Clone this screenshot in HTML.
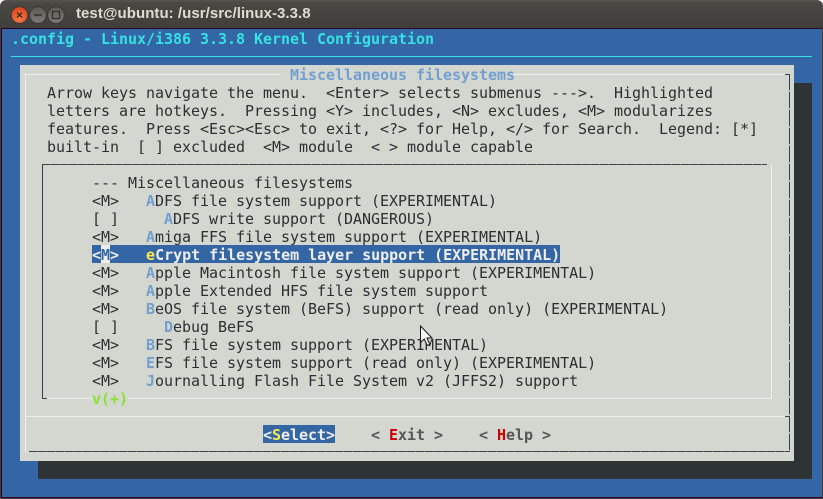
<!DOCTYPE html>
<html><head><meta charset="utf-8">
<style>
html,body{margin:0;padding:0;background:#000;}
#w{position:relative;width:823px;height:499px;overflow:hidden;background:#2c001e;}
.a{position:absolute;}
.t{position:absolute;white-space:pre;font:15px/18px "DejaVu Sans Mono","Liberation Mono",monospace;letter-spacing:-0.03px;color:#2a3032;height:18px;transform:translateY(1px);}
.b{color:#729fcf;}
.hl{color:#eeeeec;font-weight:bold;}
.lt{background:#eeeeec;position:absolute;}
.dk{position:absolute;background:#3c4246;}
.dh{background:repeating-linear-gradient(90deg,#3c4246 0,#3c4246 8px,#6f8294 8px,#6f8294 9px);}
.dv{background:repeating-linear-gradient(180deg,#2e3f55 0,#2e3f55 16px,#aeb4b4 16px,#aeb4b4 18px);}
</style></head><body>
<div id="w">
<!-- corners -->
<div class="a" style="left:0;top:0;width:823px;height:499px;background:#fff"></div>
<!-- title bar -->
<div class="a" style="left:0;top:0;width:823px;height:29px;border-radius:6px 6px 0 0;background:linear-gradient(#55534e 0,#4a4843 3px,#3f3e3a 28px)"></div>
<!-- window frame -->
<div class="a" style="left:0;top:28px;width:823px;height:471px;background:#3f3e3a"></div>
<div class="a" style="left:1px;top:28px;width:821px;height:470px;background:#2c001e"></div>
<div class="a" style="left:2px;top:29px;width:820px;height:468px;background:#3465a4"></div>
<!-- buttons -->
<svg class="a" style="left:0;top:0" width="72" height="30">
<defs>
<radialGradient id="r" cx="50%" cy="75%" r="65%"><stop offset="0" stop-color="#f47a45"/><stop offset="1" stop-color="#dd4a22"/></radialGradient>
<linearGradient id="g" x1="0" y1="0" x2="0" y2="1"><stop offset="0" stop-color="#5b5a55"/><stop offset="1" stop-color="#7d7c76"/></linearGradient>
</defs>
<circle cx="19.5" cy="15" r="8.6" fill="#33322e"/>
<circle cx="19.5" cy="15" r="7.9" fill="url(#r)"/>
<path d="M17 12.5l5 5M22 12.5l-5 5" stroke="#3c2a20" stroke-width="1.4" fill="none"/>
<circle cx="38" cy="15" r="8.6" fill="#33322e"/>
<circle cx="38" cy="15" r="7.9" fill="url(#g)"/>
<path d="M34 15h8" stroke="#33322e" stroke-width="1.5"/>
<circle cx="56" cy="15" r="8.6" fill="#33322e"/>
<circle cx="56" cy="15" r="7.9" fill="url(#g)"/>
<rect x="52.5" y="11.5" width="7" height="7" fill="none" stroke="#33322e" stroke-width="1.3"/>
</svg>
<div class="a" style="left:76px;top:4px;font:bold 15px/20px 'Liberation Sans',sans-serif;color:#dfdbd2;white-space:pre;letter-spacing:0.05px">test@ubuntu: /usr/src/linux-3.3.8</div>

<!-- header -->
<div class="t" style="left:11px;top:29px;color:#34e2e2;font-weight:bold">.config - Linux/i386 3.3.8 Kernel Configuration</div>
<div class="a" style="left:11px;top:56px;width:801px;height:1px;background:#34e2e2"></div>

<!-- shadow and dialog -->
<div class="a" style="left:38px;top:83px;width:774px;height:396px;background:#2e3436"></div>
<div class="a" style="left:20px;top:65px;width:774px;height:396px;background:#d3d7cf"></div>

<!-- outer border -->
<div class="lt" style="left:24px;top:74px;width:256px;height:1px"></div>
<div class="lt" style="left:514px;top:74px;width:271px;height:1px"></div>
<div class="lt" style="left:25px;top:74px;width:1px;height:378px"></div>
<div class="dk" style="left:785px;top:74px;width:5px;height:1px"></div>
<div class="dk dv" style="left:789px;top:74px;width:1px;height:378px"></div>
<div class="dk dh" style="left:29px;top:451px;width:761px;height:1px"></div>
<div class="lt" style="left:25px;top:416px;width:760px;height:1px"></div>
<div class="dk" style="left:785px;top:416px;width:5px;height:1px"></div>

<!-- inner list border -->
<div class="dk dh" style="left:42px;top:164px;width:725px;height:1px"></div>
<div class="dk" style="left:42px;top:164px;width:1px;height:234px;background:#2e3f55"></div>
<div class="dk" style="left:42px;top:398px;width:5px;height:1px"></div>
<div class="lt" style="left:47px;top:398px;width:725px;height:1px"></div>
<div class="lt" style="left:771px;top:164px;width:1px;height:235px"></div>

<!-- dialog title -->
<div class="t" style="left:290px;top:65px;color:#729fcf;font-weight:bold">Miscellaneous filesystems</div>

<!-- help text -->
<div class="t" style="left:47px;top:83px">Arrow keys navigate the menu.  &lt;Enter&gt; selects submenus ---&gt;.  Highlighted</div>
<div class="t" style="left:47px;top:101px">letters are hotkeys.  Pressing &lt;Y&gt; includes, &lt;N&gt; excludes, &lt;M&gt; modularizes</div>
<div class="t" style="left:47px;top:119px">features.  Press &lt;Esc&gt;&lt;Esc&gt; to exit, &lt;?&gt; for Help, &lt;/&gt; for Search.  Legend: [*]</div>
<div class="t" style="left:47px;top:137px">built-in  [ ] excluded  &lt;M&gt; module  &lt; &gt; module capable</div>

<!-- list -->
<div class="t" style="left:92px;top:173px">--- Miscellaneous filesystems</div>
<div class="t" style="left:92px;top:191px">&lt;M&gt;   <span class="b" style="font-weight:bold">A</span>DFS file system support (EXPERIMENTAL)</div>
<div class="t" style="left:92px;top:209px">[ ]     <span class="b" style="font-weight:bold">A</span>DFS write support (DANGEROUS)</div>
<div class="t" style="left:92px;top:227px">&lt;M&gt;   <span class="b" style="font-weight:bold">A</span>miga FFS file system support (EXPERIMENTAL)</div>
<div class="a" style="left:92px;top:245px;width:468px;height:18px;background:#3465a4"></div>
<div class="a" style="left:101px;top:245px;width:9px;height:18px;background:#eeeeec"></div>
<div class="t hl" style="left:92px;top:245px">&lt;<span style="color:#3465a4">M</span>&gt;   <span style="color:#fce94f">e</span>Crypt filesystem layer support (EXPERIMENTAL)</div>
<div class="t" style="left:92px;top:263px">&lt;M&gt;   <span class="b" style="font-weight:bold">A</span>pple Macintosh file system support (EXPERIMENTAL)</div>
<div class="t" style="left:92px;top:281px">&lt;M&gt;   <span class="b" style="font-weight:bold">A</span>pple Extended HFS file system support</div>
<div class="t" style="left:92px;top:299px">&lt;M&gt;   <span class="b" style="font-weight:bold">B</span>eOS file system (BeFS) support (read only) (EXPERIMENTAL)</div>
<div class="t" style="left:92px;top:317px">[ ]     <span class="b" style="font-weight:bold">D</span>ebug BeFS</div>
<div class="t" style="left:92px;top:335px">&lt;M&gt;   <span class="b" style="font-weight:bold">B</span>FS file system support (EXPERIMENTAL)</div>
<div class="t" style="left:92px;top:353px">&lt;M&gt;   <span class="b" style="font-weight:bold">E</span>FS file system support (read only) (EXPERIMENTAL)</div>
<div class="t" style="left:92px;top:371px">&lt;M&gt;   <span class="b" style="font-weight:bold">J</span>ournalling Flash File System v2 (JFFS2) support</div>
<div class="a" style="left:92px;top:389px;width:36px;height:18px;background:#d3d7cf"></div>
<div class="t" style="left:92px;top:389px;color:#8ae234;font-weight:bold">v(+)</div>

<!-- buttons -->
<div class="a" style="left:263px;top:425px;width:72px;height:18px;background:#3465a4"></div>
<div class="t hl" style="left:263px;top:425px">&lt;<span style="color:#fce94f">S</span>elect&gt;</div>
<div class="t" style="left:371px;top:425px;color:#555753;font-weight:bold">&lt; <span style="color:#cc0000">E</span>xit &gt;</div>
<div class="t" style="left:479px;top:425px;color:#555753;font-weight:bold">&lt; <span style="color:#cc0000">H</span>elp &gt;</div>

<!-- mouse cursor -->
<svg class="a" style="left:419px;top:325px" width="16" height="24">
<path d="M1.5 1L1.5 17.5L5.3 14L8.2 20.5L10.8 19.4L8 13L13 13Z" fill="#f4f4f2" stroke="#151515" stroke-width="1"/>
</svg>
</div>
</body></html>
